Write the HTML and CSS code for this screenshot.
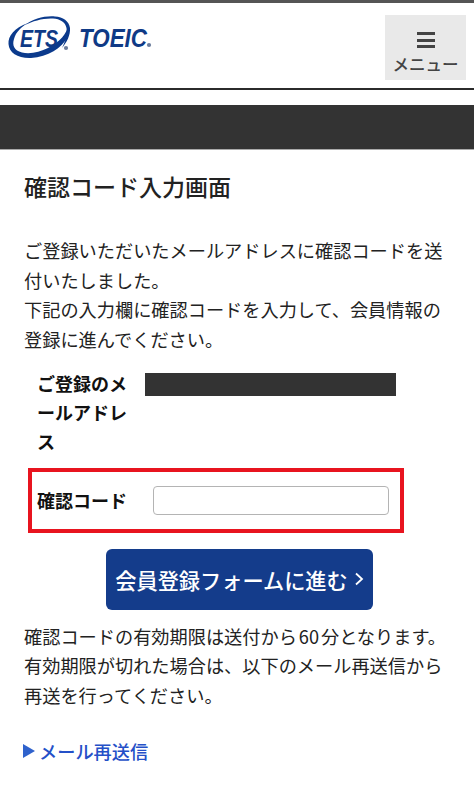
FILE: index.html
```html
<!DOCTYPE html>
<html lang="ja">
<head>
<meta charset="utf-8">
<title>確認コード入力画面</title>
<link rel="stylesheet" href="styles.css">
</head>
<body>
<header class="site-header">
  <svg class="logo" viewBox="0 0 180 50" width="180" height="50" aria-label="ETS TOEIC">
    <path class="swoosh" d="M28 8C14 13 8 21 8.500 29C9 38 18 43.500 31 43C48 42 62 33 67.500 22C69 18 69 14 68 11C67 18 60 27 48 33C40 37 30 39.500 22 37.500C14 35.500 12 30 14 24C16 17 21 12 28 8Z"/>
    <path class="swoosh" d="M25 10C33 4 45 0.500 55 1.500C63 2 69 6 70 13C70.500 20 67 27 62 33C65 27 67.500 20 66.500 13C65.500 7 60 4 53 3.500C43 3 33 6 25 10Z"/>
    <text class="logo-ets" x="20" y="32" textLength="38" lengthAdjust="spacingAndGlyphs">ETS</text>
    <text class="logo-toeic" x="79" y="32" textLength="68" lengthAdjust="spacingAndGlyphs">TOEIC</text>
    <circle class="reg" cx="66" cy="33" r="2.100"/>
    <circle class="reg" cx="149" cy="30" r="2.100"/>
  </svg>
  <button class="menu-btn" type="button">
    <span class="menu-icon"><i></i><i></i><i></i></span>
    <span class="menu-label">メニュー</span>
  </button>
</header>
<div class="band"></div>
<main class="content">
  <h1 class="title">確認コード入力画面</h1>
  <p class="lead">ご登録いただいたメールアドレスに確認コードを送付いたしました。<br>下記の入力欄に確認コードを入力して、会員情報の登録に進んでください。</p>
  <div class="mail-row">
    <div class="field-label mail-label">ご登録のメールアドレス</div>
    <div class="redacted"></div>
  </div>
  <div class="code-box">
    <label class="field-label code-label" for="code">確認コード</label>
    <input class="code-input" id="code" type="text">
  </div>
  <div class="action">
    <button class="submit" type="button"><span>会員登録フォームに進む</span><svg class="chev" viewBox="0 0 10 14" width="10" height="14"><path d="M2 1.500 8 7 2 12.500"/></svg></button>
  </div>
  <p class="note">確認コードの有効期限は送付から<span class="num">60</span>分となります。<br>有効期限が切れた場合は、以下のメール再送信から再送を行ってください。</p>
  <a class="resend" href="#"><svg class="tri" viewBox="0 0 12 14" width="12" height="14"><path d="M0 0 12 7 0 14Z"/></svg><span>メール再送信</span></a>
</main>
</body>
</html>
```

FILE: styles.css
```css
* { box-sizing: border-box; }
html, body { margin: 0; padding: 0; }
body {
  width: 474px;
  height: 800px;
  overflow: hidden;
  background: #fff;
  color: #222;
  font-family: "Noto Sans CJK JP", "Noto Sans", sans-serif;
  font-size: 18.200px;
}
.site-header {
  height: 90px;
  border-top: 3px solid #555;
  border-bottom: 2px solid #2b2b2b;
  display: flex;
  justify-content: space-between;
  align-items: flex-start;
  padding: 12px 8px 0 0;
}
.logo { display: block; }
.swoosh { fill: #0b3a8c; }
.logo-ets, .logo-toeic {
  fill: #0f3a86;
  font-family: "Liberation Sans", sans-serif;
  font-style: italic;
  font-weight: 700;
}
.logo-ets { font-size: 23.500px; }
.logo-toeic { font-size: 26.500px; }
.reg { fill: #6c7d9c; }
.menu-btn {
  width: 81px;
  height: 65px;
  border: 0;
  padding: 17px 0 0;
  background: #e9e9e9;
  color: #444;
  display: flex;
  flex-direction: column;
  align-items: center;
  font-family: inherit;
}
.menu-icon { display: flex; flex-direction: column; gap: 3.500px; width: 18px; }
.menu-icon i { display: block; height: 3px; background: #444; }
.menu-label { font-size: 16.500px; line-height: 20px; margin-top: 6px; font-weight: 500; white-space: nowrap; }
.band {
  height: 45px;
  margin-top: 15px;
  background: #333;
  border-bottom: 1px solid #aaa;
}
.content { padding: 0 25px 0 24px; }
.title {
  margin: 21px 0 0;
  font-size: 23px;
  line-height: 30px;
  font-weight: 500;
  color: #222;
}
.lead {
  margin: 35px -5px 0 0;
  line-height: 29.500px;
}
.mail-row {
  display: flex;
  margin: 15px 0 0 13px;
  align-items: flex-start;
}
.field-label { font-weight: 700; font-size: 18px; color: #111; }
.mail-label { width: 92px; line-height: 29px; word-break: break-all; }
.redacted {
  width: 251px;
  height: 23px;
  margin: 4px 0 0 16px;
  background: #333;
}
.code-box {
  width: 376px;
  height: 65px;
  margin: 11.500px 0 0 4px;
  border: 4px solid #e8141f;
  display: flex;
  align-items: center;
  padding: 0 10px 0 5px;
}
.code-label { width: 116px; flex: none; line-height: 28px; white-space: nowrap; }
.code-input {
  width: 236px;
  height: 29px;
  flex: none;
  border: 1px solid #b4b4b4;
  border-radius: 4px;
  background: #fff;
}
.action { display: flex; margin: 16px 0 0 82px; }
.submit {
  width: 267px;
  height: 61px;
  border: 0;
  border-radius: 6px;
  background: #143c8b;
  color: #fff;
  font-family: inherit;
  font-size: 21.200px;
  font-weight: 500;
  display: flex;
  align-items: center;
  justify-content: center;
  gap: 6px;
  padding: 0;
  white-space: nowrap;
}
.chev { fill: none; stroke: #fff; stroke-width: 1.800; }
.note {
  margin: 12px -6px 0 0;
  line-height: 29.500px;
}
.num { margin: 0 2px; }
.resend {
  display: flex;
  align-items: center;
  gap: 4px;
  margin: 26px 0 0 -1px;
  color: #2450c8;
  font-weight: 500;
  line-height: 30px;
  text-decoration: none;
}
.tri { fill: #2f62cc; }
```
